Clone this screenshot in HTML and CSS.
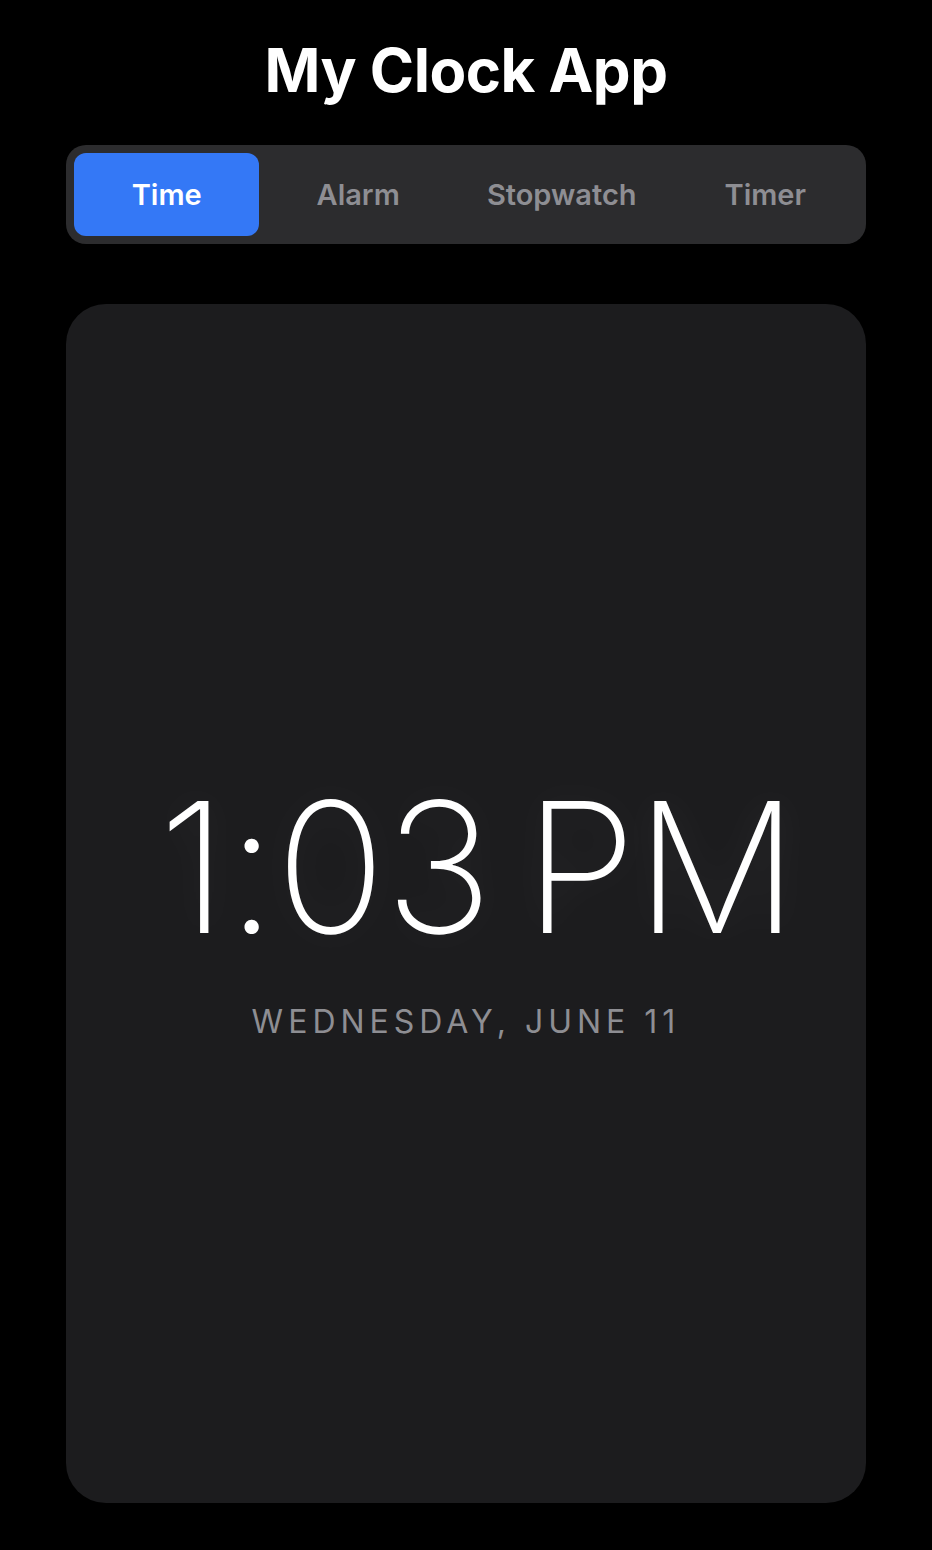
FILE: index.html
```html
<!DOCTYPE html>
<html lang="en">
<head>
<meta charset="utf-8">
<title>My Clock App</title>
<link rel="stylesheet" href="styles.css">
</head>
<body>
<div class="app">
  <h1 class="title">My Clock App</h1>
  <nav class="tabs">
    <button class="tab active">Time</button>
    <button class="tab">Alarm</button>
    <button class="tab">Stopwatch</button>
    <button class="tab">Timer</button>
  </nav>
  <main class="card">
    <div class="time">1:03 PM</div>
    <div class="date">WEDNESDAY, JUNE 11</div>
  </main>
</div>
</body>
</html>
```

FILE: styles.css
```css
html, body {
  margin: 0;
  padding: 0;
  background: #000;
}
body {
  font-family: Inter, "Noto Sans", "Liberation Sans", sans-serif;
  color: #fff;
}
.app {
  width: 800px;
  margin: 0 auto;
  display: flex;
  flex-direction: column;
}
.title {
  margin: 0;
  padding-top: 32px;
  height: 145px;
  box-sizing: border-box;
  text-align: center;
  font-size: 60px;
  font-weight: 700;
  line-height: 76px;
  letter-spacing: -0.5px;
}
.tabs {
  display: flex;
  gap: 6px;
  padding: 8px;
  background: #2c2c2e;
  border-radius: 20px;
  height: 99px;
  box-sizing: border-box;
}
.tab {
  flex: 1 1 0;
  padding: 0 30px;
  border: none;
  background: transparent;
  color: #8e8e93;
  font-family: inherit;
  font-size: 29px;
  font-weight: 600;
  border-radius: 12px;
  white-space: nowrap;
}
.tab.active {
  background: #3478f6;
  color: #fff;
}
.card {
  margin-top: 60px;
  height: 1199px;
  background: #1c1c1e;
  border-radius: 40px;
  display: flex;
  flex-direction: column;
  align-items: center;
  justify-content: center;
  box-sizing: border-box;
}
.time {
  padding-left: 24px;
  font-size: 182px;
  font-weight: 200;
  line-height: 200px;
  letter-spacing: -1px;
  word-spacing: -18px;
  text-shadow: 0 0 40px rgba(255, 255, 255, 0.08);
}
.date {
  margin-top: 35px;
  font-size: 32px;
  font-weight: 400;
  letter-spacing: 5px;
  color: #8e8e93;
}
```
